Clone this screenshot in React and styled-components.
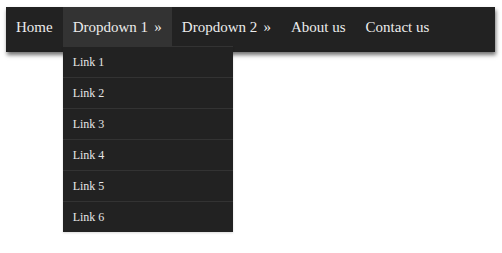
import styled, { createGlobalStyle } from "styled-components";

const GlobalStyle = createGlobalStyle`
  html, body {
    margin: 0;
    background: #ffffff;
    font-family: "Liberation Serif", "Times New Roman", serif;
  }
`;

const menu = [
  { label: "Home" },
  {
    label: "Dropdown 1",
    more: true,
    open: true,
    links: ["Link 1", "Link 2", "Link 3", "Link 4", "Link 5", "Link 6"],
  },
  { label: "Dropdown 2", more: true },
  { label: "About us" },
  { label: "Contact us" },
];

const App = () => {
  return (
    <Page>
      <GlobalStyle />
      <Nav>
        <Menu>
          {menu.map((item) => (
            <Item key={item.label} $active={item.open}>
              <TopLink href="#">
                {item.label}
                {item.more && <Arrow> »</Arrow>}
              </TopLink>
              {item.open && (
                <Dropdown>
                  {item.links.map((link) => (
                    <SubItem key={link}>
                      <SubLink href="#">{link}</SubLink>
                    </SubItem>
                  ))}
                </Dropdown>
              )}
            </Item>
          ))}
        </Menu>
      </Nav>
    </Page>
  );
};

export default App;

const Page = styled.div`
  box-sizing: border-box;
  min-height: 100vh;
  padding: 7px 7px 0 6px;
`;

const Nav = styled.nav`
  position: relative;
  background-color: #222222;
  padding-bottom: 5px;
  box-shadow: 1px 3px 4px rgba(0, 0, 0, 0.55);
`;

const Menu = styled.ul`
  display: flex;
  margin: 0;
  padding: 0;
  list-style: none;
`;

const Item = styled.li`
  position: relative;
  background-color: ${(p) => (p.$active ? "#333333" : "transparent")};
`;

const TopLink = styled.a`
  display: block;
  padding: 0 10px;
  line-height: 40px;
  font-size: 15px;
  color: #ececec;
  text-decoration: none;
  white-space: nowrap;
`;

const Arrow = styled.span`
  margin-left: 2.5px;
`;

const Dropdown = styled.ul`
  position: absolute;
  top: 100%;
  left: 0;
  width: 170px;
  margin: 0;
  padding: 0;
  list-style: none;
  background-color: #222222;
  z-index: 5;
  box-shadow: 0 1px 2px rgba(0, 0, 0, 0.15);
`;

const SubItem = styled.li`
  border-top: 1px solid #333333;
  &:first-child {
    margin-top: -1px;
  }
`;

const SubLink = styled.a`
  display: block;
  padding: 0 10px;
  line-height: 30px;
  font-size: 12px;
  color: #e6e6e6;
  text-decoration: none;
`;
